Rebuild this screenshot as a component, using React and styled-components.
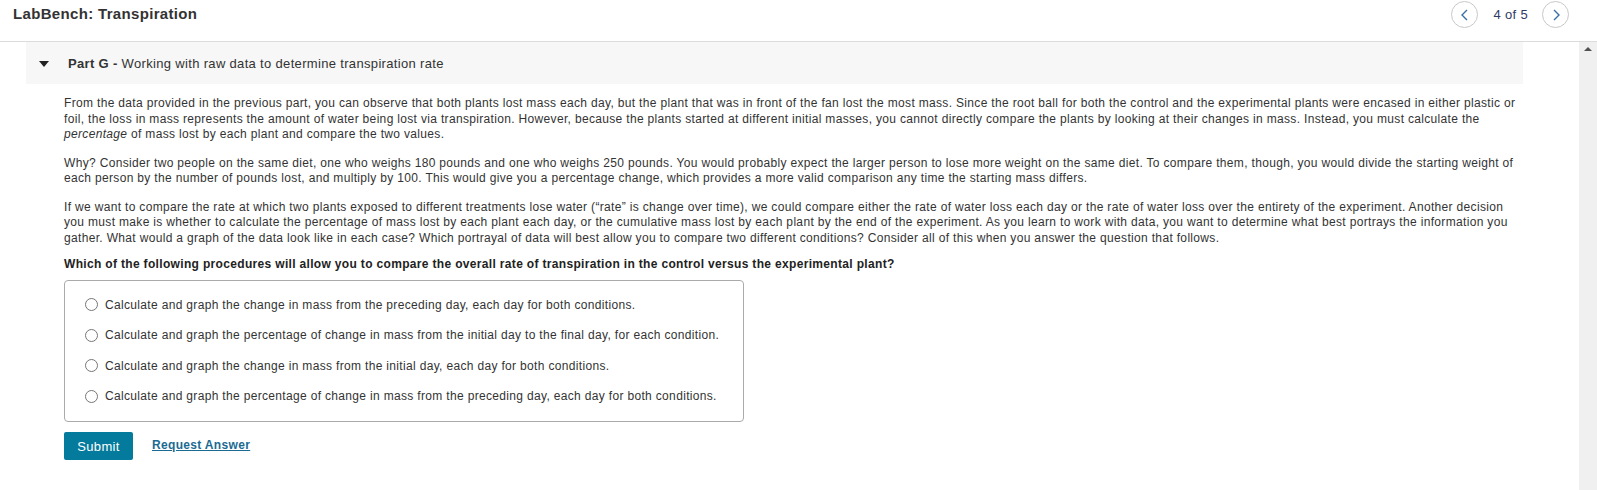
import styled, { createGlobalStyle } from "styled-components";

const Global = createGlobalStyle`
  html, body {
    margin: 0;
    padding: 0;
    background: #fff;
    font-family: "Liberation Sans", Arial, sans-serif;
    color: #333;
    letter-spacing: 0.33px;
  }
  * { box-sizing: border-box; }
`;

const Page = styled.div`
  width: 1597px;
  height: 490px;
  display: flex;
  flex-direction: column;
  overflow: hidden;
`;

const TopBar = styled.header`
  height: 42px;
  flex: none;
  display: flex;
  align-items: flex-start;
  justify-content: space-between;
  padding: 5px 28px 0 13px;
  border-bottom: 1px solid #dcdcdc;
`;

const Title = styled.h1`
  margin: 0;
  font-size: 15px;
  font-weight: bold;
  color: #333;
  line-height: 18px;
`;

const Pager = styled.div`
  display: flex;
  align-items: center;
  margin-top: -4px;
`;

const RoundButton = styled.button`
  width: 27px;
  height: 27px;
  border-radius: 50%;
  border: 1px solid #c8c8c8;
  background: #fff;
  padding: 0;
  display: flex;
  align-items: center;
  justify-content: center;
  color: #3b6ea5;
  cursor: pointer;
`;

const PageCount = styled.span`
  font-size: 13px;
  color: #2f3a66;
  padding: 0 14px 0 15px;
`;

const Body = styled.div`
  flex: 1;
  display: flex;
  min-height: 0;
`;

const Content = styled.main`
  flex: 1;
  padding: 0 56px 0 26px;
`;

const PartHeader = styled.div`
  height: 42px;
  background: #f7f7f7;
  display: flex;
  align-items: center;
  padding-left: 13px;
  font-size: 13px;
  color: #333;
`;

const Caret = styled.span`
  width: 0;
  height: 0;
  border-left: 5px solid transparent;
  border-right: 5px solid transparent;
  border-top: 6px solid #222;
  margin-right: 19px;
  margin-top: 1px;
`;

const Strong = styled.b`
  font-weight: bold;
  margin-right: 4px;
`;

const Section = styled.section`
  padding: 12px 3px 0 38px;
  font-size: 12px;
  line-height: 15.5px;
  color: #333;
`;

const Para = styled.p`
  margin: 0 0 13px;
`;

const Question = styled.p`
  margin: -2px 0 0;
  font-weight: bold;
  color: #222;
`;

const Choices = styled.div`
  margin-top: 7px;
  width: 680px;
  border: 1px solid #aaa;
  border-radius: 4px;
  padding: 16px 0 17px 18px;
  display: flex;
  flex-direction: column;
  gap: 14.5px;
`;

const Choice = styled.label`
  display: flex;
  align-items: center;
  gap: 7px;
  font-size: 12px;
  line-height: 16px;
  color: #333;
`;

const Radio = styled.span`
  width: 13px;
  height: 13px;
  border-radius: 50%;
  border: 1px solid #767676;
  background: #fff;
  flex: none;
  margin-left: 2px;
`;

const Actions = styled.div`
  display: flex;
  align-items: center;
  gap: 19px;
  margin-top: 10px;
`;

const SubmitButton = styled.button`
  height: 28px;
  width: 69px;
  background: #047a9c;
  color: #fff;
  border: none;
  border-radius: 2px;
  font-family: inherit;
  font-size: 13px;
  letter-spacing: 0.3px;
  padding: 0;
`;

const Link = styled.a`
  font-size: 12px;
  font-weight: bold;
  color: #1a6a92;
  text-decoration: underline;
`;

const Scrollbar = styled.div`
  width: 18px;
  flex: none;
  background: #f0f0f0;
  display: flex;
  justify-content: center;
  padding-top: 5px;
`;

const ArrowUp = styled.span`
  width: 0;
  height: 0;
  border-left: 4px solid transparent;
  border-right: 4px solid transparent;
  border-bottom: 4px solid #505050;
`;

const Chevron = ({ dir }) => (
  <svg width="12" height="14" viewBox="0 0 12 14" fill="none">
    <path
      d={dir === "left" ? "M8 2 L3 7 L8 12" : "M4 2 L9 7 L4 12"}
      stroke="currentColor"
      strokeWidth="1.4"
    />
  </svg>
);

const choices = [
  "Calculate and graph the change in mass from the preceding day, each day for both conditions.",
  "Calculate and graph the percentage of change in mass from the initial day to the final day, for each condition.",
  "Calculate and graph the change in mass from the initial day, each day for both conditions.",
  "Calculate and graph the percentage of change in mass from the preceding day, each day for both conditions.",
];

export default function App() {
  return (
    <Page>
      <Global />
      <TopBar>
        <Title>LabBench: Transpiration</Title>
        <Pager>
          <RoundButton aria-label="previous">
            <Chevron dir="left" />
          </RoundButton>
          <PageCount>4 of 5</PageCount>
          <RoundButton aria-label="next">
            <Chevron dir="right" />
          </RoundButton>
        </Pager>
      </TopBar>
      <Body>
        <Content>
          <PartHeader>
            <Caret />
            <Strong>Part G -</Strong> Working with raw data to determine transpiration rate
          </PartHeader>
          <Section>
            <Para>
              From the data provided in the previous part, you can observe that both plants lost mass each day, but the plant that was in front of the fan lost the most mass. Since the root ball for both the control and the experimental plants were encased in either plastic or foil, the loss in mass represents the amount of water being lost via transpiration. However, because the plants started at different initial masses, you cannot directly compare the plants by looking at their changes in mass. Instead, you must calculate the <i>percentage</i> of mass lost by each plant and compare the two values.
            </Para>
            <Para>
              Why? Consider two people on the same diet, one who weighs 180 pounds and one who weighs 250 pounds. You would probably expect the larger person to lose more weight on the same diet. To compare them, though, you would divide the starting weight of each person by the number of pounds lost, and multiply by 100. This would give you a percentage change, which provides a more valid comparison any time the starting mass differs.
            </Para>
            <Para>
              If we want to compare the rate at which two plants exposed to different treatments lose water (“rate” is change over time), we could compare either the rate of water loss each day or the rate of water loss over the entirety of the experiment. Another decision you must make is whether to calculate the percentage of mass lost by each plant each day, or the cumulative mass lost by each plant by the end of the experiment. As you learn to work with data, you want to determine what best portrays the information you gather. What would a graph of the data look like in each case? Which portrayal of data will best allow you to compare two different conditions? Consider all of this when you answer the question that follows.
            </Para>
            <Question>
              Which of the following procedures will allow you to compare the overall rate of transpiration in the control versus the experimental plant?
            </Question>
            <Choices>
              {choices.map((c) => (
                <Choice key={c}>
                  <Radio />
                  {c}
                </Choice>
              ))}
            </Choices>
            <Actions>
              <SubmitButton>Submit</SubmitButton>
              <Link href="#">Request Answer</Link>
            </Actions>
          </Section>
        </Content>
        <Scrollbar>
          <ArrowUp />
        </Scrollbar>
      </Body>
    </Page>
  );
}
